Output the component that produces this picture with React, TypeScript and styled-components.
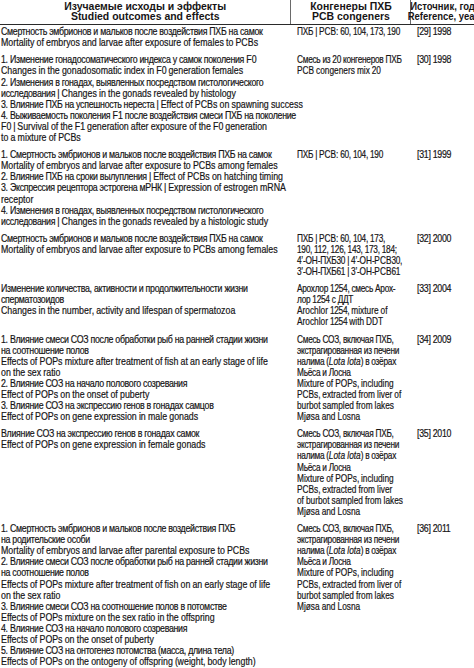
import React from "react";
import styled, { createGlobalStyle } from "styled-components";

const GlobalStyle = createGlobalStyle`
  html, body {
    margin: 0;
    padding: 0;
    background: #ffffff;
    overflow-x: hidden;
  }
  body {
    font-family: "Liberation Sans", Arial, sans-serif;
    color: #161415;
  }
`;

const Page = styled.div`
  width: 474px;
  overflow: hidden;
`;

const Table = styled.div`
  width: 478px;
  font-size: 10.5px;
  line-height: 11.1px;
`;

const HeaderRow = styled.div`
  display: grid;
  grid-template-columns: 291px 120px 1fr;
  border-bottom: 1px solid #2a2a2a;
  height: 25px;
  box-sizing: border-box;
  font-size: 11px;
  line-height: 10.8px;
`;

const HeaderCell = styled.div<{ $divider?: boolean; $trail?: number }>`
  display: flex;
  flex-direction: column;
  align-items: center;
  font-weight: bold;
  text-align: center;
  padding-top: 0.6px;
  padding-right: ${(p) => p.$trail ?? 0}px;
  border-right: ${(p) => (p.$divider ? "1px solid #6a6a6a" : "none")};
  white-space: nowrap;
  min-width: 0;
`;

const Body = styled.div`
  display: flex;
  flex-direction: column;
  gap: 6px;
  padding-top: 1.2px;
  -webkit-text-stroke: 0.2px #161415;
`;

const Row = styled.div`
  display: grid;
  grid-template-columns: 291px 120px 1fr;
`;

const Cell = styled.div<{ $pad: number }>`
  padding-left: ${(p) => p.$pad}px;
  white-space: nowrap;
`;

/* The reference uses a condensed face; emulate it by narrowing each line. */
const Line = styled.div<{ $center?: boolean; $scale?: number }>`
  display: block;
  flex: none;
  transform: scaleX(${(p) => p.$scale ?? 0.84});
  transform-origin: ${(p) => (p.$center ? "center" : "left")} center;
`;

/* Cyrillic, digits and punctuation are narrower in the reference face. */
const Tight = styled.span`
  letter-spacing: -0.35px;
`;

const Em = styled.i`
  font-style: italic;
`;

const fit = (s: string): React.ReactNode =>
  s
    .split(/([A-Za-zø]+)/)
    .filter((p) => p.length > 0)
    .map((p, i) =>
      /^[A-Za-zø]+$/.test(p) ? (
        <React.Fragment key={i}>{p}</React.Fragment>
      ) : (
        <Tight key={i}>{p}</Tight>
      )
    );

type Entry = {
  outcomes: string[];
  congeners: React.ReactNode[];
  ref: string;
};

const lotaLine = (
  <>
    <Tight>налима (</Tight>
    <Em>Lota lota</Em>
    <Tight>) в озёрах</Tight>
  </>
);

const popsMix1: React.ReactNode[] = [
  "Смесь СОЗ, включая ПХБ,",
  "экстрагированная из печени",
  lotaLine,
  "Мьёса и Лосна",
  "Mixture of POPs, including",
  "PCBs, extracted from liver of",
  "burbot sampled from lakes",
  "Mjøsa and Losna",
];

const popsMix2: React.ReactNode[] = [
  "Смесь СОЗ, включая ПХБ,",
  "экстрагированная из печени",
  lotaLine,
  "Мьёса и Лосна",
  "Mixture of POPs, including",
  "PCBs, extracted from liver",
  "of burbot sampled from lakes",
  "Mjøsa and Losna",
];

const rows: Entry[] = [
  {
    outcomes: [
      "Смертность эмбрионов и мальков после воздействия ПХБ на самок",
      "Mortality of embryos and larvae after exposure of females to PCBs",
    ],
    congeners: ["ПХБ | PCB: 60, 104, 173, 190"],
    ref: "[29] 1998",
  },
  {
    outcomes: [
      "1. Изменение гонадосоматического индекса у самок поколения F0",
      "Changes in the gonadosomatic index in F0 generation females",
      "2. Изменения в гонадах, выявленных посредством гистологического",
      "исследования | Changes in the gonads revealed by histology",
      "3. Влияние ПХБ на успешность нереста | Effect of PCBs on spawning success",
      "4. Выживаемость поколения F1 после воздействия смеси ПХБ на поколение",
      "F0 | Survival of the F1 generation after exposure of the F0 generation",
      "to a mixture of PCBs",
    ],
    congeners: ["Смесь из 20 конгенеров ПХБ", "PCB congeners mix 20"],
    ref: "[30] 1998",
  },
  {
    outcomes: [
      "1. Смертность эмбрионов и мальков после воздействия ПХБ на самок",
      "Mortality of embryos and larvae after exposure to PCBs among females",
      "2. Влияние ПХБ на сроки вылупления | Effect of PCBs on hatching timing",
      "3. Экспрессия рецептора эстрогена мРНК | Expression of estrogen mRNA",
      "receptor",
      "4. Изменения в гонадах, выявленных посредством гистологического",
      "исследования | Changes in the gonads revealed by a histologic study",
    ],
    congeners: ["ПХБ | PCB: 60, 104, 190"],
    ref: "[31] 1999",
  },
  {
    outcomes: [
      "Смертность эмбрионов и мальков после воздействия ПХБ на самок",
      "Mortality of embryos and larvae after exposure to PCBs among females",
    ],
    congeners: [
      "ПХБ | PCB: 60, 104, 173,",
      "190, 112, 126, 143, 173, 184;",
      "4’-OH-ПХБ30 | 4’-OH-PCB30,",
      "3’-OH-ПХБ61 | 3’-OH-PCB61",
    ],
    ref: "[32] 2000",
  },
  {
    outcomes: [
      "Изменение количества, активности и продолжительности жизни",
      "сперматозоидов",
      "Changes in the number, activity and lifespan of spermatozoa",
    ],
    congeners: [
      "Арохлор 1254, смесь Арох-",
      "лор 1254 с ДДТ",
      "Arochlor 1254, mixture of",
      "Arochlor 1254 with DDT",
    ],
    ref: "[33] 2004",
  },
  {
    outcomes: [
      "1. Влияние смеси СОЗ после обработки рыб на ранней стадии жизни",
      "на соотношение полов",
      "Effects of POPs mixture after treatment of fish at an early stage of life",
      "on the sex ratio",
      "2. Влияние СОЗ на начало полового созревания",
      "Effect of POPs on the onset of puberty",
      "3. Влияние СОЗ на экспрессию генов в гонадах самцов",
      "Effect of POPs on gene expression in male gonads",
    ],
    congeners: popsMix1,
    ref: "[34] 2009",
  },
  {
    outcomes: [
      "Влияние СОЗ на экспрессию генов в гонадах самок",
      "Effect of POPs on gene expression in female gonads",
    ],
    congeners: popsMix2,
    ref: "[35] 2010",
  },
  {
    outcomes: [
      "1. Смертность эмбрионов и мальков после воздействия ПХБ",
      "на родительские особи",
      "Mortality of embryos and larvae after parental exposure to PCBs",
      "2. Влияние смеси СОЗ после обработки рыб на ранней стадии жизни",
      "на соотношение полов",
      "Effects of POPs mixture after treatment of fish on an early stage of life",
      "on the sex ratio",
      "3. Влияние смеси СОЗ на соотношение полов в потомстве",
      "Effects of POPs mixture on the sex ratio in the offspring",
      "4. Влияние СОЗ на начало полового созревания",
      "Effects of POPs on the onset of puberty",
      "5. Влияние СОЗ на онтогенез потомства (масса, длина тела)",
      "Effects of POPs on the ontogeny of offspring (weight, body length)",
    ],
    congeners: popsMix1,
    ref: "[36] 2011",
  },
];

const Lines: React.FC<{ items: React.ReactNode[]; scale?: number }> = ({
  items,
  scale,
}) => (
  <>
    {items.map((t, i) => (
      <Line key={i} $scale={scale}>
        {typeof t === "string" ? fit(t) : t}
      </Line>
    ))}
  </>
);

const HeadLine: React.FC<{ children: string; scale?: number }> = ({
  children,
  scale = 0.95,
}) => (
  <Line $center $scale={scale}>
    {children}
  </Line>
);

export default function App() {
  return (
    <>
      <GlobalStyle />
      <Page>
        <Table>
          <HeaderRow>
            <HeaderCell $divider>
              <HeadLine>Изучаемые исходы и эффекты</HeadLine>
              <HeadLine>Studied outcomes and effects</HeadLine>
            </HeaderCell>
            <HeaderCell $divider>
              <HeadLine>Конгенеры ПХБ</HeadLine>
              <HeadLine>PCB congeners</HeadLine>
            </HeaderCell>
            <HeaderCell $trail={4}>
              <HeadLine scale={0.86}>Источник, год</HeadLine>
              <HeadLine scale={0.86}>Reference, year</HeadLine>
            </HeaderCell>
          </HeaderRow>
          <Body>
            {rows.map((r, i) => (
              <Row key={i}>
                <Cell $pad={1}>
                  <Lines items={r.outcomes} />
                </Cell>
                <Cell $pad={6}>
                  <Lines items={r.congeners} scale={0.79} />
                </Cell>
                <Cell $pad={6}>
                  <Lines items={[r.ref]} />
                </Cell>
              </Row>
            ))}
          </Body>
        </Table>
      </Page>
    </>
  );
}
